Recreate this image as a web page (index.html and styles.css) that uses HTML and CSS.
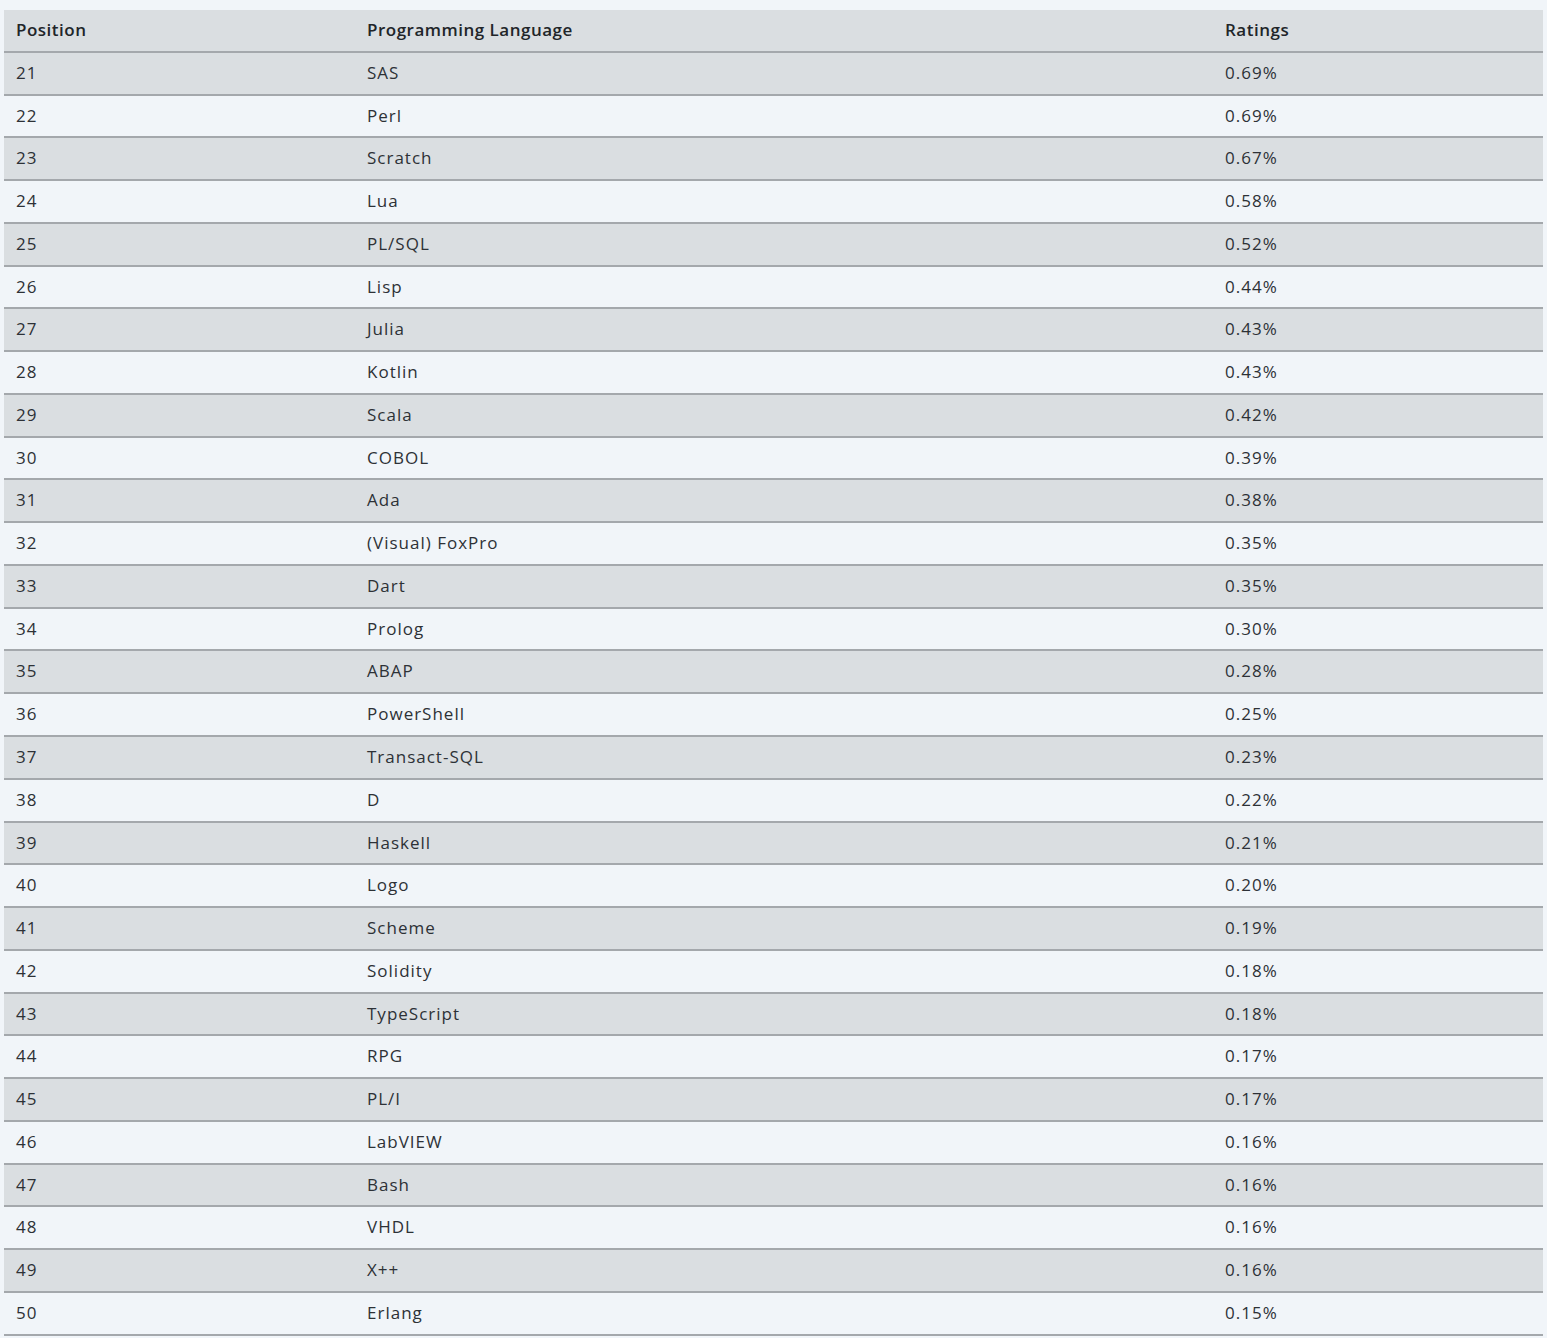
FILE: index.html
```html
<!DOCTYPE html>
<html>
<head>
<meta charset="utf-8">
<link rel="stylesheet" href="styles.css">
</head>
<body>
<table class="rank">
<thead>
<tr><th class="c-pos">Position</th><th class="c-lang">Programming Language</th><th class="c-rate">Ratings</th></tr>
</thead>
<tbody>
<tr><td>21</td><td>SAS</td><td>0.69%</td></tr>
<tr><td>22</td><td>Perl</td><td>0.69%</td></tr>
<tr><td>23</td><td>Scratch</td><td>0.67%</td></tr>
<tr><td>24</td><td>Lua</td><td>0.58%</td></tr>
<tr><td>25</td><td>PL/SQL</td><td>0.52%</td></tr>
<tr><td>26</td><td>Lisp</td><td>0.44%</td></tr>
<tr><td>27</td><td>Julia</td><td>0.43%</td></tr>
<tr><td>28</td><td>Kotlin</td><td>0.43%</td></tr>
<tr><td>29</td><td>Scala</td><td>0.42%</td></tr>
<tr><td>30</td><td>COBOL</td><td>0.39%</td></tr>
<tr><td>31</td><td>Ada</td><td>0.38%</td></tr>
<tr><td>32</td><td>(Visual) FoxPro</td><td>0.35%</td></tr>
<tr><td>33</td><td>Dart</td><td>0.35%</td></tr>
<tr><td>34</td><td>Prolog</td><td>0.30%</td></tr>
<tr><td>35</td><td>ABAP</td><td>0.28%</td></tr>
<tr><td>36</td><td>PowerShell</td><td>0.25%</td></tr>
<tr><td>37</td><td>Transact-SQL</td><td>0.23%</td></tr>
<tr><td>38</td><td>D</td><td>0.22%</td></tr>
<tr><td>39</td><td>Haskell</td><td>0.21%</td></tr>
<tr><td>40</td><td>Logo</td><td>0.20%</td></tr>
<tr><td>41</td><td>Scheme</td><td>0.19%</td></tr>
<tr><td>42</td><td>Solidity</td><td>0.18%</td></tr>
<tr><td>43</td><td>TypeScript</td><td>0.18%</td></tr>
<tr><td>44</td><td>RPG</td><td>0.17%</td></tr>
<tr><td>45</td><td>PL/I</td><td>0.17%</td></tr>
<tr><td>46</td><td>LabVIEW</td><td>0.16%</td></tr>
<tr><td>47</td><td>Bash</td><td>0.16%</td></tr>
<tr><td>48</td><td>VHDL</td><td>0.16%</td></tr>
<tr><td>49</td><td>X++</td><td>0.16%</td></tr>
<tr><td>50</td><td>Erlang</td><td>0.15%</td></tr>
</tbody>
</table>
</body>
</html>
```

FILE: styles.css
```css
html, body {
  margin: 0;
  padding: 0;
  background: #f1f5f9;
}
body {
  padding: 10px 4px 0 4px;
  font-family: "Open Sans", "Noto Sans", "Liberation Sans", sans-serif;
  color: #2d3136;
}
.rank {
  width: 1539px;
  border-collapse: collapse;
  table-layout: fixed;
  font-size: 17px;
}
.c-pos { width: 327px; }
.c-lang { width: 834px; }
.c-rate { width: auto; }
.rank th, .rank td {
  text-align: left;
  padding: 8px 12px;
  line-height: 24.77px;
  border-bottom: 2px solid #a4a8ac;
  letter-spacing: 1px;
}
.rank th {
  background: #dadee1;
  font-weight: 600;
  color: #212529;
  letter-spacing: 0.5px;
}
.rank tbody tr:nth-child(odd) td {
  background: #dadee1;
}
.rank tbody tr:nth-child(even) td {
  background: #f1f5f9;
}
```
